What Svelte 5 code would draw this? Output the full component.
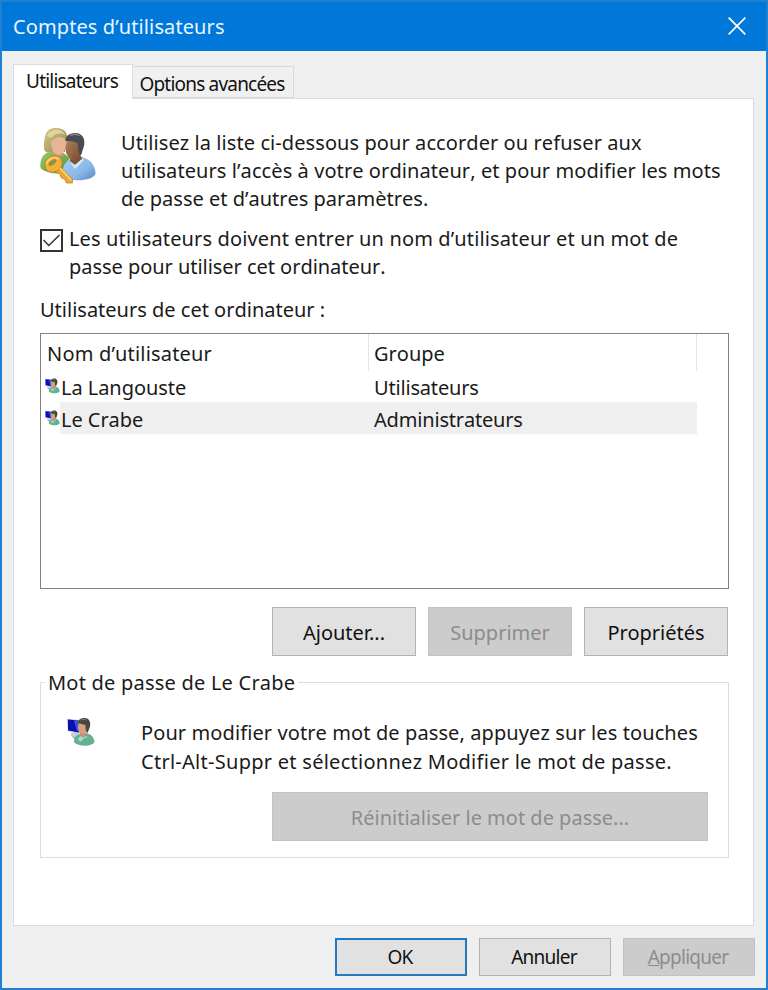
<script>
  let tab = $state('users');
  let required = $state(true);
  let selected = $state('Le Crabe');

  const users = [
    { name: 'La Langouste', group: 'Utilisateurs' },
    { name: 'Le Crabe', group: 'Administrateurs' }
  ];
</script>

{#snippet userIcon()}
  <svg class="user-icon" viewBox="0 0 28 28">
    <path d="M4 15l7-2 4 6-6 3-5-4z" fill="#c9cdd2" />
    <path d="M6 19l6 3" stroke="#8e979f" stroke-width="1" />
    <path d="M0 1l12 1 1 13-12-2z" fill="#aeb9e0" />
    <path d="M1 1.500l10 1 1 12-11-2z" fill="#0a10b4" />
    <path d="M7 2.200l4 .4 1 11-2-.4z" fill="#4058d8" />
    <path d="M7 24c0-5 3-8 7-8l5-1c5 1 8 4 8.500 9-3 5-16 5-20.500 0z" fill="#64b093" />
    <path d="M11 21c2-4 6-4 10-2-3 0-5 3-8 5z" fill="#a5dcc4" />
    <path d="M13 14l6-1 1 4-4 3-3-3z" fill="#c29070" />
    <ellipse cx="16" cy="9.500" rx="5" ry="6.500" fill="#d2a27e" />
    <path d="M10.500 5c1-4 4-5 7-5 5 0 7 5 5 10l-2 5c-2-2-2-5-2-8-3-1-5-1-8-2z" fill="#4b4540" />
    <path d="M13 2.500c2-2 5-2 7 0-2-1-5-1-7 0z" fill="#8d8780" />
  </svg>
{/snippet}

<div class="window">
  <header class="titlebar">
    <span class="title">Comptes d’utilisateurs</span>
    <svg class="close" viewBox="0 0 18 18">
      <path d="M.7 .7l16.600 16.600M17.300 .7L.7 17.300" stroke="#fff" stroke-width="1.700" />
    </svg>
  </header>

  <div class="body">
    <nav class="tabs">
      <button class="tab" class:active={tab === 'users'} onclick={() => (tab = 'users')}>Utilisateurs</button>
      <button class="tab" class:active={tab === 'advanced'} onclick={() => (tab = 'advanced')}>Options avancées</button>
    </nav>

    <main class="panel">
      <section class="intro">
        <svg class="users-icon" viewBox="0 0 57 57">
          <defs>
            <linearGradient id="green" x1="0" y1="0" x2="1" y2="1">
              <stop offset="0" stop-color="#9ccb6c" />
              <stop offset="1" stop-color="#4f9238" />
            </linearGradient>
            <linearGradient id="blue" x1="0" y1="0" x2="1" y2="1">
              <stop offset="0" stop-color="#a9cff4" />
              <stop offset=".6" stop-color="#8bb8e8" />
              <stop offset="1" stop-color="#5788c0" />
            </linearGradient>
            <linearGradient id="hair" x1="0" y1="0" x2="1" y2="1">
              <stop offset="0" stop-color="#d6cd8e" />
              <stop offset="1" stop-color="#93834a" />
            </linearGradient>
            <linearGradient id="skin" x1="0" y1="0" x2="1" y2="1">
              <stop offset="0" stop-color="#b5855f" />
              <stop offset="1" stop-color="#74492f" />
            </linearGradient>
          </defs>
          <path d="M.5 41c-1-9 3-15 9-16h13l7 6-2 15C20 47 6 47 .5 41z" fill="url(#green)" />
          <path d="M4 22C4 6 7 1 16 1c9 0 12 5 11 12l-2 12H10c-3 1-5 0-6-3z" fill="url(#hair)" />
          <path d="M12 22h9l3 6-5 3-7-4z" fill="#c99470" />
          <path d="M11 14c3-1 4-4 8-4 5 0 7 2 7 6 0 7-3 12-7 12-5 0-8-5-8-14z" fill="#e6b595" />
          <path d="M7 9c3-7 14-9 18-1-6-3-11-1-14 3z" fill="#eee6ac" opacity=".7" />
          <path d="M22 49c0-9 3-15 10-18l10-1c8 2 13 8 13.500 16 0 8-27 10-33.500 3z" fill="url(#blue)" />
          <path d="M31 29h10l1 3-7 6-5-4z" fill="#805234" />
          <path d="M30 35l5 3 7-6 2 1-9 9z" fill="#d5eafa" />
          <ellipse cx="34" cy="21" rx="8.500" ry="12" fill="url(#skin)" />
          <path d="M25.500 14c0-6 5-8 10-8 8 0 11 8 7.500 16l-2 6c-3-2-3-6-3-11-3-3-8-3-12.500-3z" fill="#4a4b50" />
          <path d="M29 9.500c3-4 9-4 12 0-4-2-8-2-12 0z" fill="#888b90" />
          <path d="M18 38l14.500 14v4h-6l-2-4-3-1-2-4-5-3z" fill="#eba833" stroke="#c98420" stroke-width=".8" />
          <ellipse cx="13.500" cy="37" rx="9" ry="7.800" transform="rotate(-35 13.500 37)" fill="#f0b03a" stroke="#c98420" stroke-width=".8" />
          <path d="M20 41l11 12" stroke="#ffd979" stroke-width="1.500" />
          <path d="M6.500 37c1-5 7-8 12-5" fill="none" stroke="#ffd575" stroke-width="1.500" />
          <ellipse cx="12.500" cy="35.500" rx="4.200" ry="1.900" transform="rotate(-35 12.500 35.500)" fill="#78a047" stroke="#b07a1c" stroke-width=".7" />
        </svg>
        <p>
          <span class="i1">Utilisez la liste ci-dessous pour accorder ou refuser aux</span><br />
          <span class="i2">utilisateurs l’accès à votre ordinateur, et pour modifier les mots</span><br />
          <span class="i3">de passe et d’autres paramètres.</span>
        </p>
      </section>

      <label class="check">
        <input type="checkbox" bind:checked={required} />
        <span class="box">
          {#if required}
            <svg viewBox="0 0 19 19"><path d="M1.500 9l5.300 5.500L17.500 4" fill="none" stroke="#333" stroke-width="1.500" /></svg>
          {/if}
        </span>
        <span class="check-text">
          <span class="c1">Les utilisateurs doivent entrer un nom d’utilisateur et un mot de</span><br />
          <span class="c2">passe pour utiliser cet ordinateur.</span>
        </span>
      </label>

      <div class="list-label">Utilisateurs de cet ordinateur :</div>

      <div class="list">
        <div class="row head">
          <div class="name">Nom d’utilisateur</div>
          <div class="group">Groupe</div>
        </div>
        {#each users as user}
          <!-- svelte-ignore a11y_click_events_have_key_events, a11y_no_static_element_interactions -->
          <div class="row" class:selected={user.name === selected} onclick={() => (selected = user.name)}>
            {@render userIcon()}
            <div class="name">{user.name}</div>
            <div class="group">{user.group}</div>
          </div>
        {/each}
      </div>

      <div class="actions">
        <button class="btn">Ajouter...</button>
        <button class="btn" disabled>Supprimer</button>
        <button class="btn">Propriétés</button>
      </div>

      <section class="password">
        <h2>Mot de passe de {selected}</h2>
        <div class="password-info">
          {@render userIcon()}
          <p>
            <span class="p1">Pour modifier votre mot de passe, appuyez sur les touches</span><br />
            <span class="p2">Ctrl-Alt-Suppr et sélectionnez Modifier le mot de passe.</span>
          </p>
        </div>
        <button class="btn reset" disabled>Réinitialiser le mot de passe...</button>
      </section>
    </main>

    <footer>
      <button class="btn ok">OK</button>
      <button class="btn">Annuler</button>
      <button class="btn" disabled><u>A</u>ppliquer</button>
    </footer>
  </div>
</div>

<style>
  :global(body) {
    margin: 0;
  }

  .window {
    box-sizing: border-box;
    width: 768px;
    height: 990px;
    display: flex;
    flex-direction: column;
    border: 2px solid #1f7fd0;
    background: #efefef;
    color: #1a1a1a;
    font-family: "Noto Sans", "Open Sans", sans-serif;
    font-size: 20px;
    line-height: 28.3px;
    font-kerning: none;
  }

  .window * {
    box-sizing: border-box;
  }

  p, h2 {
    margin: 0;
    font-size: inherit;
    font-weight: 400;
    white-space: nowrap;
  }

  .titlebar {
    height: 49px;
    flex: none;
    display: flex;
    align-items: center;
    justify-content: space-between;
    padding: 0 20px 0 11px;
    background: #0078d9;
    color: #e8f6ff;
  }

  .title {
    padding-top: 2px;
    letter-spacing: 0.1px;
  }

  .close {
    width: 18px;
    height: 18px;
    margin-bottom: 1px;
  }

  .body {
    flex: 1;
    display: flex;
    flex-direction: column;
    padding: 12px 11px 12px;
  }

  .tabs {
    display: flex;
    align-items: flex-end;
    height: 35px;
    flex: none;
  }

  .tab {
    height: 32px;
    width: 161px;
    padding: 3px 2px 0 0;
    border: 1px solid #d9d9d9;
    border-left: 0;
    background: #f0f0f0;
    color: #111;
    font: 19px "Noto Sans", sans-serif;
    font-kerning: none;
    letter-spacing: -0.8px;
    white-space: nowrap;
  }

  .tab.active {
    width: 120px;
    height: 35px;
    padding: 0 2px 3px 0;
    border: 1px solid #dcdcdc;
    border-bottom: 0;
    background: #fff;
    position: relative;
    top: 1px;
  }

  .panel {
    width: 741px;
    height: 828px;
    flex: none;
    padding: 28px 24px 0 26px;
    border: 1px solid #dcdcdc;
    background: #fff;
  }

  .intro {
    display: flex;
    height: 86px;
  }

  .intro p {
    padding-top: 1.5px;
  }

  .users-icon {
    width: 57px;
    height: 57px;
    margin-right: 24px;
    flex: none;
  }

  .check {
    display: flex;
    margin-top: 11px;
    height: 57px;
    white-space: nowrap;
  }

  .check-text {
    padding-top: 1px;
  }

  .check input {
    display: none;
  }

  .box {
    width: 23px;
    height: 23px;
    margin: 5px 6px 0 0;
    border: 2px solid #333;
    display: flex;
    flex: none;
  }

  .list-label {
    margin-top: 15px;
  }

  .i1, .i2 { letter-spacing: 0.08px; }
  .c1 { letter-spacing: 0.13px; }
  .c2 { letter-spacing: -0.04px; }
  .p1 { letter-spacing: 0.1px; }
  .p2 { letter-spacing: 0.27px; }

  .list {
    width: 689px;
    height: 256px;
    margin-top: 9px;
    border: 1px solid #828282;
  }

  .row {
    display: flex;
    align-items: center;
    width: 656px;
    height: 32px;
    padding-left: 4px;
  }

  .row .name {
    width: 309px;
    height: 32px;
    padding: 4px 0 0 1px;
    letter-spacing: -0.05px;
  }

  .row .group {
    height: 32px;
    flex: 1;
    padding: 4px 0 0 5px;
    letter-spacing: -0.18px;
  }

  .row .user-icon {
    width: 15px;
    height: 16px;
    margin: 0;
    flex: none;
  }

  .row.head {
    height: 37px;
    padding-left: 6px;
    margin-bottom: -1px;
    border-right: 1px solid #e5e5e5;
  }

  .head .name {
    width: 322px;
    height: 37px;
    padding: 6px 0 0;
    border-right: 1px solid #e5e5e5;
    letter-spacing: 0.18px;
  }

  .head .group {
    height: 37px;
    padding: 6px 0 0 5px;
    letter-spacing: 0;
  }

  .row.selected .name,
  .row.selected .group {
    background: #efefef;
  }

  .actions {
    display: flex;
    justify-content: flex-end;
    gap: 12px;
    margin: 18px 1px 0 0;
  }

  .btn {
    width: 144px;
    height: 49px;
    padding: 2px 0 0;
    border: 1px solid #b3b3b3;
    background: #e1e1e1;
    color: #111;
    font: 20px "Noto Sans", sans-serif;
    white-space: nowrap;
  }

  .btn:disabled {
    border-color: #c2c2c2;
    background: #ccc;
    color: #8c8c8c;
  }

  .password {
    width: 689px;
    height: 176px;
    margin-top: 26px;
    border: 1px solid #dcdcdc;
  }

  .password h2 {
    width: fit-content;
    height: 28px;
    margin: -14px 0 0 4px;
    padding: 0 3px;
    background: #fff;
    letter-spacing: 0.22px;
  }

  .password-info {
    display: flex;
    padding: 21px 0 0 26px;
  }

  .password-info p {
    padding-top: 1px;
  }

  .password-info .user-icon {
    width: 28px;
    height: 28px;
    margin-right: 46px;
    flex: none;
  }

  .reset {
    display: block;
    width: 436px;
    margin: 16px 0 0 231px;
  }

  footer {
    display: flex;
    justify-content: flex-end;
    gap: 12px;
    margin-top: 12px;
  }

  footer .btn {
    width: 132px;
    height: 38px;
    padding: 0 2px 0 0;
    font-size: 19px;
    letter-spacing: -0.75px;
  }

  footer .ok {
    border: 2px solid #2478bd;
  }
</style>
